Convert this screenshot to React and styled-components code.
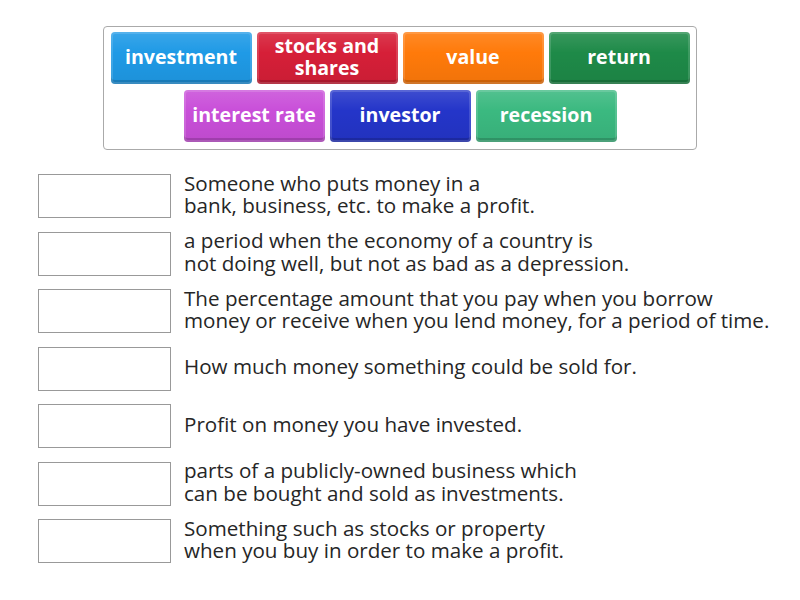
import React from "react";
import styled, { createGlobalStyle } from "styled-components";

const tiles = [
  { label: "investment", color: "#1f9ae6" },
  { label: "stocks and shares", color: "#d61f38" },
  { label: "value", color: "#ff7a0a" },
  { label: "return", color: "#1e8a48" },
  { label: "interest rate", color: "#c94fd9" },
  { label: "investor", color: "#2435c9" },
  { label: "recession", color: "#3bb980" },
];

const definitions = [
  "Someone who puts money in a\nbank, business, etc. to make a profit.",
  "a period when the economy of a country is\nnot doing well, but not as bad as a depression.",
  "The percentage amount that you pay when you borrow\nmoney or receive when you lend money, for a period of time.",
  "How much money something could be sold for.",
  "Profit on money you have invested.",
  "parts of a publicly-owned business which\ncan be bought and sold as investments.",
  "Something such as stocks or property\nwhen you buy in order to make a profit.",
];

export default function App() {
  return (
    <>
      <GlobalStyle />
      <Page>
        <TilePanel>
          {tiles.map((t) => (
            <Tile key={t.label} $color={t.color}>
              {t.label}
            </Tile>
          ))}
        </TilePanel>
        <MatchList>
          {definitions.map((d, i) => (
            <MatchRow key={i}>
              <DropBox />
              <Definition>{d}</Definition>
            </MatchRow>
          ))}
        </MatchList>
      </Page>
    </>
  );
}

const GlobalStyle = createGlobalStyle`
  body {
    margin: 0;
    background: #fff;
    font-family: "Open Sans", "Liberation Sans", sans-serif;
  }
`;

const Page = styled.div`
  width: 800px;
  height: 600px;
  padding-top: 26px;
  box-sizing: border-box;
`;

const TilePanel = styled.div`
  margin-left: 103px;
  width: 594px;
  height: 124px;
  box-sizing: border-box;
  border: 1px solid #aaa;
  border-radius: 4px;
  padding: 5px 6px;
  display: flex;
  flex-wrap: wrap;
  justify-content: center;
  align-content: flex-start;
  column-gap: 5px;
  row-gap: 6px;
`;

const Tile = styled.div`
  width: 141px;
  height: 52px;
  box-sizing: border-box;
  border-radius: 4px;
  background: ${(p) => p.$color};
  background-image: linear-gradient(
    to bottom,
    rgba(255, 255, 255, 0.12),
    rgba(255, 255, 255, 0) 40%,
    rgba(0, 0, 0, 0.06)
  );
  box-shadow: inset 0 0 0 2px rgba(255, 255, 255, 0.14),
    inset 0 -4px 0 rgba(0, 0, 0, 0.16);
  color: #fff;
  font-weight: 700;
  font-size: 19.6px;
  line-height: 22px;
  text-align: center;
  display: flex;
  align-items: center;
  justify-content: center;
  padding: 0 4px 2px;
`;

const MatchList = styled.div`
  margin-top: 24px;
  display: flex;
  flex-direction: column;
  gap: 13.5px;
`;

const MatchRow = styled.div`
  display: flex;
  align-items: center;
  height: 44px;
  padding-left: 38px;
`;

const DropBox = styled.div`
  width: 133px;
  height: 44px;
  box-sizing: border-box;
  border: 1px solid #999;
  background: #fff;
  flex-shrink: 0;
`;

const Definition = styled.div`
  margin-left: 13px;
  margin-top: -4px;
  font-size: 20.6px;
  line-height: 22.5px;
  color: #262626;
  white-space: pre-line;
`;
